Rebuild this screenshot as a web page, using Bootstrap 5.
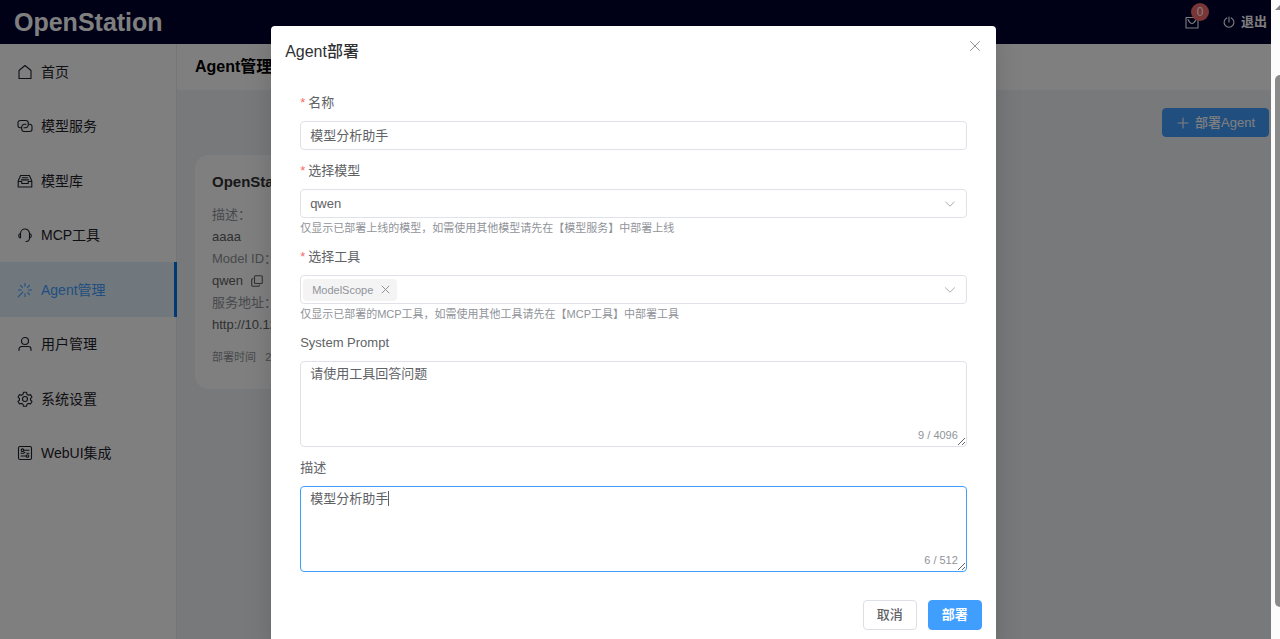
<!DOCTYPE html>
<html lang="zh-CN">
<head>
<meta charset="utf-8">
<meta name="viewport" content="width=device-width, initial-scale=1">
<title>OpenStation - Agent管理</title>
<link href="https://cdn.jsdelivr.net/npm/bootstrap@5.3.0/dist/css/bootstrap.min.css" rel="stylesheet">
<style>
  :root { --os-blue: #409eff; --os-line: #dfe2e9; --os-text: #606266; --os-muted: #909399; }
  body { font-family: "Liberation Sans", "Noto Sans CJK SC", sans-serif; font-size: 13px; line-height: 22px; color: #303133; }
  svg { fill: none; stroke: currentColor; stroke-width: 1.1; stroke-linecap: round; stroke-linejoin: round; flex: none; }
  .os-topbar { background: #00002e; height: 44px; color: #fff; padding-left: 14px; }
  .os-brand { font-size: 25px; color: #fff; line-height: 44px; }
  .os-bell { width: 14px; height: 44px; }
  .os-count { position: absolute; top: 3px; left: 6px; min-width: 18px; height: 18px; border-radius: 9px; background: #f56c6c; font-size: 12px; line-height: 18px; text-align: center; }
  .os-exit { gap: 6px; }
  .os-side { width: 177px; border-right: 1px solid #e8ebf0; }
  .os-menu { display: grid; grid-auto-rows: 1fr; height: 436px; }
  .os-menu a { display: flex; align-items: center; gap: 8px; padding: 1px 0 0 17px; font-size: 14px; color: #1d2129; text-decoration: none; margin-right: -1px; }
  .os-menu a.active { background: #e0f1fc; color: var(--os-blue); border-right: 3px solid #0074e8; }
  .os-content { background: #f0f2f5; }
  .os-title { height: 46px; line-height: 45px; font-size: 16px; padding-left: 18px; color: #000; }
  .os-tools { padding: 18px 2px 18px 0; }
  .os-primary { --bs-btn-bg: #409eff; --bs-btn-border-color: #409eff; --bs-btn-color: #fff; --bs-btn-hover-bg: #66b1ff; --bs-btn-hover-border-color: #66b1ff; --bs-btn-hover-color: #fff; }
  .os-btn { font-size: 13px; line-height: 20px; padding: 4px 13px; border-radius: 4px; }
  .os-tools .os-btn { line-height: 19px; gap: 5px; font-weight: 500; }
  .os-agent { width: 400px; border-radius: 14px; padding: 16px 17px; min-height: 234px; margin-left: 18px; }
  .os-agent h2 { font-size: 15px; line-height: 22px; margin: 0 0 11px; }
  .os-agent dt { font-weight: 400; color: var(--os-muted); }
  .os-agent dd { margin: 0; color: var(--os-text); }
  .os-date { font-size: 11px; color: var(--os-muted); margin-top: 10px; }
  .os-mask { position: absolute; inset: 0; background: rgba(0,0,0,.5); padding: 26px 4px 0 0; overflow: hidden; }
  .os-dialog { width: 57.2%; min-width: 320px; margin: 0 auto; background: #fff; border-radius: 4px; padding: 14px 14px 18px; box-shadow: 0 8px 28px rgba(0,0,0,.15); }
  .os-dialog h1 { font-size: 16px; line-height: 24px; margin: 0; }
  .os-x { background: none; border: 0; padding: 0; color: var(--os-muted); line-height: 1; display: flex; }
  .os-x svg { stroke-width: 1; }
  .os-form { padding: 25px 15px 28px; display: flex; flex-direction: column; gap: 7px; }
  .os-form label { display: block; line-height: 28px; margin-bottom: 4px; color: var(--os-text); }
  .os-req::before { content: "*"; color: #f56c6c; margin-right: 3px; }
  .os-field { font-size: 13px; line-height: 19px; color: var(--os-text); border-color: var(--os-line); border-radius: 4px; padding: 4px 9px; min-height: 29px; }
  .os-field:focus { border-color: var(--os-blue); box-shadow: none; color: var(--os-text); }
  select.os-field { background-image: url("data:image/svg+xml,%3Csvg xmlns='http://www.w3.org/2000/svg' viewBox='0 0 12 12'%3E%3Cpath d='M1.5 3.8 6 8.2l4.5-4.4' fill='none' stroke='%23a8abb2' stroke-width='1'/%3E%3C/svg%3E"); background-size: 12px 12px; background-position: right 10px center; padding: 4px 30px 4px 9px; }
  .os-multi { padding: 0 10px 0 2px; height: 29px; }
  .os-multi > svg { color: #a8abb2; stroke-width: 1; }
  .os-multi input { border: 0; outline: 0; min-width: 0; height: 22px; }
  .os-chip { background: #f4f4f5; color: var(--os-muted); border-radius: 4px; font-size: 11px; line-height: 22px; padding: 0 7px 0 9px; gap: 8px; }
  .os-hint { font-size: 11px; line-height: 16px; padding-top: 2px; color: var(--os-muted); }
  textarea.os-field { height: 86px; display: block; padding-top: 2px; }
  #desc { caret-color: transparent; }
  .os-caret { position: absolute; left: 88px; top: 5px; width: 1px; height: 15px; background: var(--os-text); }
  .os-limit { position: absolute; right: 9px; bottom: 3px; font-size: 11px; line-height: 18px; color: var(--os-muted); }
  .os-actions { gap: 11px; }
  .os-cancel { --bs-btn-border-color: #dcdfe6; --bs-btn-color: #606266; --bs-btn-hover-color: #409eff; --bs-btn-hover-bg: #ecf5ff; --bs-btn-hover-border-color: #c6e2ff; }
  .os-cancel, .os-actions .os-primary { font-weight: 500; }
  .os-scroll { width: 9px; background: #fcfcfc; padding: 5px 0 32px 4px; }
  .os-thumb { background: #8b8b8b; border-radius: 5px 0 0 5px; }
  .os-up { height: 5px; margin-bottom: 65px; background: #8b8b8b; clip-path: polygon(100% 0, 100% 100%, 0 100%); }
</style>
</head>
<body class="vh-100 overflow-hidden d-flex">
<div class="position-relative flex-grow-1 d-flex flex-column overflow-hidden">
  <header class="os-topbar d-flex align-items-center justify-content-between">
    <a href="#" class="os-brand fw-bold text-decoration-none">OpenStation</a>
    <div class="d-flex align-items-center gap-4 pe-1">
      <a href="#" class="os-bell position-relative d-flex align-items-center text-white text-decoration-none" aria-label="消息">
        <svg width="14" height="14" viewBox="0 0 14 14"><path d="M1 2.500h12v10.500H1zM3 4.500c1.500 3 2.500 4 4 4s2.500-1 4-4"/></svg>
        <span class="os-count">0</span>
      </a>
      <a href="#" class="os-exit d-flex align-items-center text-white text-decoration-none fw-bold"><svg width="12" height="12" viewBox="0 0 12 12"><path d="M6 1v5M3.800 1.900a4.900 4.900 0 1 0 4.400 0"/></svg>退出</a>
    </div>
  </header>
  <div class="d-flex flex-grow-1">
    <nav class="os-side flex-shrink-0 bg-white">
      <div class="os-menu">
        <a href="#"><svg width="16" height="16" viewBox="0 0 16 16"><path d="M2 14.500V6.500L8 1.500l6 5v8z"/></svg>首页</a>
        <a href="#"><svg width="16" height="16" viewBox="0 0 16 16"><path d="M4 9.700H3.200A2.200 2.200 0 0 1 1 7.500V4.700a2.200 2.200 0 0 1 2.200-2.200h5.600A2.600 2.600 0 0 1 11.300 5v1.600A3 3 0 0 1 8.300 9.700H7M12 6.300h.800A2.200 2.200 0 0 1 15 8.500v2.800a2.200 2.200 0 0 1-2.200 2.200H7.200A2.600 2.600 0 0 1 4.700 11V9.400a3 3 0 0 1 3-3.100H9"/></svg>模型服务</a>
        <a href="#"><svg width="16" height="16" viewBox="0 0 16 16"><path d="M1.200 8 3.600 2.500h8.800L14.800 8v6H1.200zM1.200 8.500h3.600v2h6.400v-2h3.600M5.300 4.800h5.400M4.400 6.900h7.200"/></svg>模型库</a>
        <a href="#"><svg width="16" height="16" viewBox="0 0 16 16"><path d="M3.500 6.500a4.500 4.500 0 0 1 9 0v4.500a3.300 3.300 0 0 1-3.500 3.500M3.500 6.500a2.300 2.300 0 0 0 0 4.500zM12.500 6.500a2.300 2.300 0 0 1 0 4.500"/></svg>MCP工具</a>
        <a href="#" class="active"><svg width="16" height="16" viewBox="0 0 16 16"><path d="M8 1.500v2.800M8 11.700v2.800M1.500 8h2.800M11.700 8h2.800M3.400 3.400l2 2M12.600 3.400l-2 2M10.600 10.600l2 2M5.800 10.200l-4.600 4.600"/></svg>Agent管理</a>
        <a href="#"><svg width="16" height="16" viewBox="0 0 16 16"><circle cx="8" cy="5" r="3.500"/><path d="M2 14.500v-1.300a2.700 2.700 0 0 1 2.700-2.700h6.600a2.700 2.700 0 0 1 2.700 2.700v1.300"/></svg>用户管理</a>
        <a href="#"><svg width="16" height="16" viewBox="0 0 16 16"><circle cx="8" cy="8" r="2.500"/><path d="M6.500 1.300h3l.500 2 1.500.900 2-.600 1.500 2.600-1.500 1.400v1.400l1.500 1.400-1.500 2.600-2-.600-1.500.900-.500 2h-3l-.500-2-1.500-.900-2 .600L1 10.400 2.500 9V7.600L1 6.200l1.500-2.600 2 .600L6 3.300z"/></svg>系统设置</a>
        <a href="#"><svg width="16" height="16" viewBox="0 0 16 16"><rect x="1.500" y="1.500" width="13" height="13" rx="1.500"/><circle cx="5.500" cy="5.200" r="1.300"/><circle cx="10.500" cy="11" r="1.300"/><path d="M7 5.200h5M4 11h5M4 8.300h2.500l1.500-1M12 8.300h-2"/></svg>WebUI集成</a>
      </div>
    </nav>
    <main class="os-content flex-grow-1">
      <div class="os-title bg-white fw-bold">Agent管理</div>
      <div class="os-tools d-flex justify-content-end">
        <button type="button" class="btn os-btn os-primary d-flex align-items-center"><svg width="14" height="14" viewBox="0 0 14 14"><path d="M7 2v10M2 7h10"/></svg>部署Agent</button>
      </div>
      <section class="os-agent bg-white">
        <h2 class="fw-bold">OpenStation</h2>
        <dl class="mb-0">
          <dt>描述：</dt><dd>aaaa</dd>
          <dt>Model ID：</dt>
          <dd class="d-flex align-items-center gap-2">qwen <svg width="12" height="12" viewBox="0 0 12 12"><rect x="3.500" y=".700" width="7.800" height="7.800" rx="1"/><path d="M2 3.500A1.200 1.200 0 0 0 .700 4.700v5.400a1.200 1.200 0 0 0 1.200 1.200h5.400a1.200 1.200 0 0 0 1.200-1.200"/></svg></dd>
          <dt>服务地址：</dt><dd>http://10.12</dd>
        </dl>
        <div class="os-date">部署时间 &nbsp; 2025</div>
      </section>
    </main>
  </div>
  <div class="os-mask">
    <div class="os-dialog" role="dialog" aria-labelledby="dlg">
      <div class="d-flex justify-content-between">
        <h1 id="dlg">Agent部署</h1>
        <button type="button" class="os-x align-self-start" aria-label="关闭"><svg width="14" height="12" viewBox="0 0 14 12"><path d="M2.500 1.500l9 9M11.500 1.500l-9 9"/></svg></button>
      </div>
      <form>
        <div class="os-form">
          <div><label class="os-req" for="name">名称</label><input id="name" class="form-control os-field" value="模型分析助手"></div>
          <div><label class="os-req" for="model">选择模型</label><select id="model" class="form-select os-field"><option>qwen</option></select>
            <div class="os-hint">仅显示已部署上线的模型，如需使用其他模型请先在【模型服务】中部署上线</div></div>
          <div><label class="os-req" for="tool">选择工具</label>
            <div class="form-control os-field os-multi d-flex align-items-center">
              <span class="os-chip d-flex align-items-center">ModelScope<button type="button" class="os-x" aria-label="移除"><svg width="9" height="9" viewBox="0 0 9 9"><path d="M1 1l7 7M8 1 1 8"/></svg></button></span>
              <input id="tool" class="flex-grow-1" role="combobox" aria-expanded="false">
              <svg width="12" height="12" viewBox="0 0 12 12"><path d="M1.500 3.800 6 8.200l4.500-4.400"/></svg>
            </div>
            <div class="os-hint">仅显示已部署的MCP工具，如需使用其他工具请先在【MCP工具】中部署工具</div></div>
          <div><label for="prompt">System Prompt</label><div class="position-relative"><textarea id="prompt" class="form-control os-field">请使用工具回答问题</textarea><span class="os-limit">9 / 4096</span></div></div>
          <div><label for="desc">描述</label><div class="position-relative"><textarea id="desc" class="form-control os-field" autofocus>模型分析助手</textarea><span class="os-caret"></span><span class="os-limit">6 / 512</span></div></div>
        </div>
        <div class="os-actions d-flex justify-content-end">
          <button type="button" class="btn os-btn os-cancel">取消</button>
          <button type="submit" class="btn os-btn os-primary fw-bold">部署</button>
        </div>
      </form>
    </div>
  </div>
</div>
<div class="os-scroll flex-shrink-0 d-flex flex-column" aria-hidden="true"><div class="os-up"></div><div class="os-thumb flex-grow-1"></div></div>
<script src="https://cdn.jsdelivr.net/npm/bootstrap@5.3.0/dist/js/bootstrap.bundle.min.js"></script>
<script>
  const desc = document.getElementById('desc');
  desc.focus();
  desc.setSelectionRange(desc.value.length, desc.value.length);
</script>
</body>
</html>
